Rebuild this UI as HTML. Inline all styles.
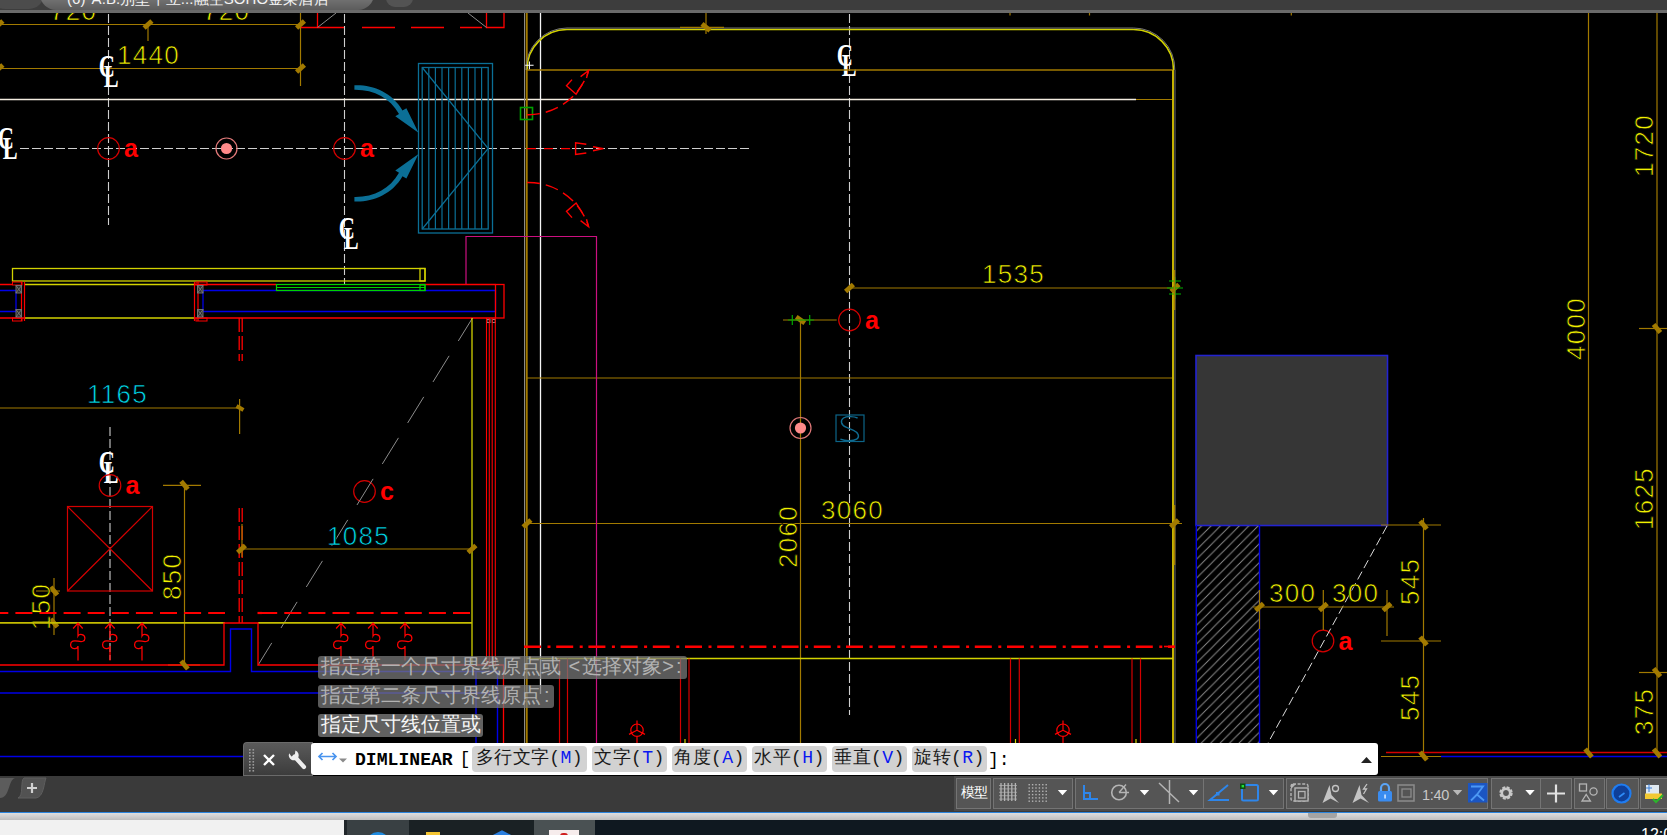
<!DOCTYPE html>
<html><head><meta charset="utf-8"><title>AutoCAD</title>
<style>
html,body{margin:0;padding:0;background:#000;overflow:hidden}
body{width:1667px;height:835px;position:relative;font-family:"Liberation Sans",sans-serif}
svg text.dim{font-family:"Liberation Sans",sans-serif;paint-order:fill stroke;stroke:#000;stroke-width:0.7px}
svg text.thinS{paint-order:fill stroke;stroke:#000;stroke-width:2.1px}
#draw{position:absolute;left:0;top:0;width:1667px;height:835px}
#topbar{position:absolute;left:0;top:0;width:1667px;height:13px;background:#3d3d3d;overflow:hidden}
#topbar .strip{position:absolute;left:0;top:10px;width:1667px;height:3px;background:#6a6a6a}
#topbar .tab{position:absolute;left:40px;top:-8px;width:334px;height:18px;border-radius:0 0 16px 16px;background:linear-gradient(#808080,#5c5c5c)}
#topbar .tab span{position:absolute;left:27px;top:-1px;color:#f4f4f4;font-size:15px;line-height:15px;white-space:nowrap;letter-spacing:0.1px}
#topbar .lt{position:absolute;left:-10px;top:-6px;width:54px;height:15px;border-radius:0 0 16px 16px;background:#4c4c4c}
#topbar .plus{position:absolute;left:386px;top:-8px;width:27px;height:15px;border-radius:0 0 9px 9px;background:#535353;color:#cfcfcf;font-weight:bold;font-size:14px;text-align:center;line-height:6px}
.tip{position:absolute;left:318px;height:23px;border-radius:3px;font-size:20px;line-height:21px;white-space:nowrap;padding:0 0 0 3px;box-sizing:border-box;overflow:hidden}
.tip.dimmed{background:rgba(122,122,122,0.74);color:#b2b2b2}
.tip.act{background:#616161;color:#f6f6f6}
#cmd{position:absolute;left:243px;top:742px;width:1135px;height:33px;}
#cmd .handle{position:absolute;left:0;top:0;width:70px;height:34px;border-radius:4px 0 0 0;background:linear-gradient(#5a5a5a,#3c3c3c);border:1px solid #6a6a6a;border-right:none;box-sizing:border-box}
#cmd .input{position:absolute;left:68px;top:1px;width:1067px;height:32px;background:#fff;border-radius:3px;font-family:"Liberation Mono",monospace;font-size:18.1px;line-height:32px;white-space:nowrap;color:#000}
#cmd .name{position:absolute;left:44px;top:1px;font-weight:bold}
.chip{letter-spacing:0.35px;position:absolute;top:3px;height:26px;line-height:25px;background:#d2d2d2;border-radius:4px;text-align:center;color:#1a1a1a}
.chip b{font-weight:normal;color:#0a18f0}
#bottom{position:absolute;left:0;top:776px;width:1667px;height:36.5px;background:#3a3a3a}
#status{position:absolute;left:954px;top:0;width:713px;height:35px;background:#4a4a4a}
.grp{position:absolute;top:1.5px;height:31px;background:#555;border:1px solid #747474;box-sizing:border-box}
#blueline{position:absolute;left:0;top:812px;width:1667px;height:1px;background:#2a84dc}
#scroll{position:absolute;left:0;top:813px;width:1667px;height:6.8px;background:linear-gradient(#dedede,#bebebe)}
#task{position:absolute;left:0;top:819.7px;width:1667px;height:15.3px;background:#0f1820;overflow:hidden}
</style></head><body>
<svg id="draw" width="1667" height="835" viewBox="0 0 1667 835" shape-rendering="auto">
<rect x="0" y="0" width="1667" height="835" fill="#000"/>
<line x1="0" y1="24.5" x2="300" y2="24.5" stroke="#a27a00" stroke-width="1.2" />
<line x1="0" y1="68.5" x2="300" y2="68.5" stroke="#a27a00" stroke-width="1.2" />
<line x1="300.5" y1="13" x2="300.5" y2="86" stroke="#a27a00" stroke-width="1.2" />
<line x1="148" y1="24" x2="148" y2="41" stroke="#a27a00" stroke-width="1.2" />
<rect x="-5.25" y="-2.4" width="10.5" height="4.8" fill="#a27a00" transform="translate(148 24.5) rotate(-42)"/>
<rect x="-5.25" y="-2.4" width="10.5" height="4.8" fill="#a27a00" transform="translate(300.5 24.5) rotate(-42)"/>
<rect x="-5.25" y="-2.4" width="10.5" height="4.8" fill="#a27a00" transform="translate(300.5 68.5) rotate(-42)"/>
<rect x="-5.25" y="-2.4" width="10.5" height="4.8" fill="#a27a00" transform="translate(-1 24.5) rotate(-42)"/>
<rect x="-5.25" y="-2.4" width="10.5" height="4.8" fill="#a27a00" transform="translate(-1 68.5) rotate(-42)"/>
<text class="dim" x="50" y="19.5" fill="#f0f000" font-size="26" text-anchor="start" letter-spacing="1.3">720</text>
<text class="dim" x="203" y="19.5" fill="#f0f000" font-size="26" text-anchor="start" letter-spacing="1.3">720</text>
<text class="dim" x="117" y="64" fill="#f0f000" font-size="26" text-anchor="start" letter-spacing="1.3">1440</text>
<path d="M301 27.5H345 M317.5 13V27.5 M486.5 13V27.5H504V13" stroke="#ff0000" stroke-width="1.3" fill="none" />
<line x1="362" y1="27.5" x2="482" y2="27.5" stroke="#ff0000" stroke-width="1.3" stroke-dasharray="33 16"/>
<line x1="317.5" y1="27.5" x2="336" y2="13" stroke="#8c8c8c" stroke-width="1" />
<line x1="486.5" y1="27.5" x2="468" y2="13" stroke="#8c8c8c" stroke-width="1" />
<line x1="108.5" y1="14" x2="108.5" y2="225" stroke="#cfcfcf" stroke-width="1.1" stroke-dasharray="9 3"/>
<line x1="344.5" y1="14" x2="344.5" y2="285" stroke="#cfcfcf" stroke-width="1.1" stroke-dasharray="9 3"/>
<line x1="20" y1="148.5" x2="752" y2="148.5" stroke="#cfcfcf" stroke-width="1.1" stroke-dasharray="9 3"/>
<line x1="849.5" y1="14" x2="849.5" y2="715" stroke="#cfcfcf" stroke-width="1.1" stroke-dasharray="9 3"/>
<line x1="110" y1="427" x2="110" y2="660" stroke="#bdbdbd" stroke-width="1.2" stroke-dasharray="9 3"/>
<line x1="0" y1="99.5" x2="1136" y2="99.5" stroke="#f2ece0" stroke-width="1.3" />
<line x1="1136" y1="99.5" x2="1172" y2="99.5" stroke="#a27a00" stroke-width="1.2" />
<line x1="540.5" y1="13" x2="540.5" y2="694" stroke="#f4f4f4" stroke-width="1.3" />
<g fill="#fff" font-family="Liberation Serif, serif" font-weight="bold"><text transform="translate(98.8 76.6) scale(0.7 1)" font-size="32">C</text><text transform="translate(103.7 87.1) scale(0.72 1)" font-size="31">L</text></g>
<g fill="#fff" font-family="Liberation Serif, serif" font-weight="bold"><text transform="translate(-2.2 148.6) scale(0.7 1)" font-size="32">C</text><text transform="translate(2.7 159.1) scale(0.72 1)" font-size="31">L</text></g>
<g fill="#fff" font-family="Liberation Serif, serif" font-weight="bold"><text transform="translate(338.8 238.6) scale(0.7 1)" font-size="32">C</text><text transform="translate(343.7 249.1) scale(0.72 1)" font-size="31">L</text></g>
<g fill="#fff" font-family="Liberation Serif, serif" font-weight="bold"><text transform="translate(836.8 65.6) scale(0.7 1)" font-size="32">C</text><text transform="translate(841.7 76.1) scale(0.72 1)" font-size="31">L</text></g>
<g fill="#fff" font-family="Liberation Serif, serif" font-weight="bold"><text transform="translate(98.8 472.6) scale(0.7 1)" font-size="32">C</text><text transform="translate(103.7 483.1) scale(0.72 1)" font-size="31">L</text></g>
<circle cx="108.5" cy="148.5" r="10.8" stroke="#d40000" stroke-width="1.2" fill="none"/>
<text x="124.0" y="157.0" fill="#ff0000" font-size="25" font-weight="bold" font-family="Liberation Sans, sans-serif">a</text>
<circle cx="344.5" cy="148.5" r="10.8" stroke="#d40000" stroke-width="1.2" fill="none"/>
<text x="360.0" y="157.0" fill="#ff0000" font-size="25" font-weight="bold" font-family="Liberation Sans, sans-serif">a</text>
<circle cx="849.5" cy="320" r="10.8" stroke="#d40000" stroke-width="1.2" fill="none"/>
<text x="865.0" y="328.5" fill="#ff0000" font-size="25" font-weight="bold" font-family="Liberation Sans, sans-serif">a</text>
<circle cx="110" cy="485.5" r="10.8" stroke="#d40000" stroke-width="1.2" fill="none"/>
<text x="125.5" y="494.0" fill="#ff0000" font-size="25" font-weight="bold" font-family="Liberation Sans, sans-serif">a</text>
<circle cx="364.5" cy="491.5" r="10.8" stroke="#d40000" stroke-width="1.2" fill="none"/>
<text x="380.0" y="500.0" fill="#ff0000" font-size="25" font-weight="bold" font-family="Liberation Sans, sans-serif">c</text>
<circle cx="1323" cy="641" r="10.8" stroke="#d40000" stroke-width="1.2" fill="none"/>
<text x="1338.5" y="649.5" fill="#ff0000" font-size="25" font-weight="bold" font-family="Liberation Sans, sans-serif">a</text>
<circle cx="226.5" cy="148.5" r="10.5" stroke="#e07878" stroke-width="1.2" fill="none"/>
<circle cx="226.5" cy="148.5" r="5.6" stroke="none" stroke-width="0" fill="#ff8a8a"/>
<path d="M354.4 85.3 C372 84.5 392 92 402.5 110.5 L406.4 108.2 L418.5 132.8 L395.3 116.3 L399 114 C390 98 374 89.5 354.4 89.8 Z" fill="#0b6f96"/>
<path d="M354.4 85.3 C372 84.5 392 92 402.5 110.5 L406.4 108.2 L418.5 132.8 L395.3 116.3 L399 114 C390 98 374 89.5 354.4 89.8 Z" fill="#0b6f96" transform="translate(0 286.8) scale(1 -1)"/>
<rect x="418.5" y="63.5" width="74" height="169.5" stroke="#0b6f96" stroke-width="1.3" fill="none" />
<rect x="422.2" y="67.5" width="66" height="161.5" stroke="#0b6f96" stroke-width="1.3" fill="none" />
<line x1="428.8" y1="67.5" x2="428.8" y2="229" stroke="#0b6f96" stroke-width="1.2" />
<line x1="435.4" y1="67.5" x2="435.4" y2="229" stroke="#0b6f96" stroke-width="1.2" />
<line x1="442.0" y1="67.5" x2="442.0" y2="229" stroke="#0b6f96" stroke-width="1.2" />
<line x1="448.59999999999997" y1="67.5" x2="448.59999999999997" y2="229" stroke="#0b6f96" stroke-width="1.2" />
<line x1="455.2" y1="67.5" x2="455.2" y2="229" stroke="#0b6f96" stroke-width="1.2" />
<line x1="461.79999999999995" y1="67.5" x2="461.79999999999995" y2="229" stroke="#0b6f96" stroke-width="1.2" />
<line x1="468.4" y1="67.5" x2="468.4" y2="229" stroke="#0b6f96" stroke-width="1.2" />
<line x1="475.0" y1="67.5" x2="475.0" y2="229" stroke="#0b6f96" stroke-width="1.2" />
<line x1="481.59999999999997" y1="67.5" x2="481.59999999999997" y2="229" stroke="#0b6f96" stroke-width="1.2" />
<path d="M422.2 67.5L488.2 148.5L422.2 229" stroke="#0b6f96" stroke-width="1.2" fill="none" />
<line x1="524.5" y1="13" x2="524.5" y2="743" stroke="#8a8a8a" stroke-width="1" />
<line x1="526.7" y1="13" x2="526.7" y2="743" stroke="#a27a00" stroke-width="2" />
<path d="M527 70 A40 40 0 0 1 567 29.5 H1133.5 A40 40 0 0 1 1173.5 70" stroke="#d2d200" stroke-width="1.6" fill="none" />
<path d="M526 70 A41 41 0 0 1 567 28 H1133.5 A41 41 0 0 1 1174.8 70" stroke="#777" stroke-width="1" fill="none" />
<line x1="680" y1="27.3" x2="724" y2="27.3" stroke="#a27a00" stroke-width="1.2" />
<line x1="706" y1="13" x2="706" y2="34" stroke="#a27a00" stroke-width="1.2" />
<rect x="-5.25" y="-2.4" width="10.5" height="4.8" fill="#a27a00" transform="translate(706 27.3) rotate(40)"/>
<line x1="527" y1="70" x2="1173" y2="70" stroke="#a27a00" stroke-width="1.6" />
<line x1="1173" y1="70" x2="1173" y2="743" stroke="#c6b200" stroke-width="2" />
<line x1="1175" y1="70" x2="1175" y2="743" stroke="#6e6e6e" stroke-width="1" />
<line x1="527" y1="378" x2="1172" y2="378" stroke="#a27a00" stroke-width="1.2" />
<line x1="527" y1="523.5" x2="1182" y2="523.5" stroke="#a27a00" stroke-width="1.2" />
<rect x="-5.25" y="-2.4" width="10.5" height="4.8" fill="#a27a00" transform="translate(527 523.5) rotate(-42)"/>
<rect x="-5.25" y="-2.4" width="10.5" height="4.8" fill="#a27a00" transform="translate(1174.5 523.5) rotate(-42)"/>
<line x1="1174.5" y1="505" x2="1174.5" y2="565" stroke="#a27a00" stroke-width="1.5" />
<line x1="1010" y1="13" x2="1010" y2="15.5" stroke="#a27a00" stroke-width="1.2" />
<line x1="1089.5" y1="13" x2="1089.5" y2="15.5" stroke="#a27a00" stroke-width="1.2" />
<line x1="1291.3" y1="13" x2="1291.3" y2="15.5" stroke="#a27a00" stroke-width="1.2" />
<path d="M525.2 65.3H533.6 M529.4 61.4V69.2" stroke="#ffffff" stroke-width="1.1" fill="none" />
<rect x="520.5" y="107.5" width="12" height="12" stroke="#00a000" stroke-width="1.6" fill="none" />
<g stroke="#ff0000" stroke-width="1.4" fill="none"><path d="M527 114.7 A63 63 0 0 0 588.6 70.5" stroke-dasharray="13 6"/><path d="M572 79.6 L566.5 85.8 L576.1 94.2 L582.4 84.2 M580.6 76.6 L588.6 70.5 L586.5 78"/></g>
<g stroke="#ff0000" stroke-width="1.4" fill="none" transform="translate(0 297.2) scale(1 -1)"><path d="M527 114.7 A63 63 0 0 0 588.6 70.5" stroke-dasharray="13 6"/><path d="M572 79.6 L566.5 85.8 L576.1 94.2 L582.4 84.2 M580.6 76.6 L588.6 70.5 L586.5 78"/></g>
<path d="M527 148.6H576" stroke="#ff0000" stroke-width="1.4" fill="none" stroke-dasharray="9 8"/>
<path d="M586.3 144.3 L575.6 142.7 V154.5 L586.3 153 M593 146.8 L603.4 148.6 L593 150.7" stroke="#ff0000" stroke-width="1.4" fill="none" />
<path d="M466 285V236.5H596.5V743" stroke="#cc1080" stroke-width="1.2" fill="none" />
<line x1="849" y1="288" x2="1173" y2="288" stroke="#a27a00" stroke-width="1.2" />
<rect x="-5.25" y="-2.4" width="10.5" height="4.8" fill="#a27a00" transform="translate(849.5 288) rotate(-42)"/>
<rect x="-5.25" y="-2.4" width="10.5" height="4.8" fill="#a27a00" transform="translate(1175 288) rotate(-42)"/>
<text class="dim" x="982" y="283" fill="#f0f000" font-size="26" text-anchor="start" letter-spacing="1.3">1535</text>
<path d="M1169 281H1181 M1169 294H1181 M1175 277V299 M1167 288H1183" stroke="#00b400" stroke-width="1" fill="none" />
<line x1="1174.5" y1="270" x2="1174.5" y2="310" stroke="#a27a00" stroke-width="1.5" />
<line x1="783" y1="320" x2="836.7" y2="320" stroke="#a27a00" stroke-width="1.2" />
<line x1="800.5" y1="320" x2="800.5" y2="743" stroke="#a27a00" stroke-width="1.2" />
<rect x="-5.25" y="-2.4" width="10.5" height="4.8" fill="#a27a00" transform="translate(800.5 320) rotate(35)"/>
<path d="M792.3 315V325 M809.7 315V325 M788 320H814" stroke="#00a800" stroke-width="1.2" fill="none" />
<circle cx="800.5" cy="428" r="10.5" stroke="#e07878" stroke-width="1.2" fill="none"/>
<circle cx="800.5" cy="428" r="5.6" stroke="none" stroke-width="0" fill="#ff8a8a"/>
<rect x="836" y="415" width="28" height="26.5" stroke="#0d6488" stroke-width="1.2" fill="none" />
<path d="M857.6 418 C854 416.2 846.5 416 843.5 418 C840 420.6 841 425 846 427.2 L853.5 430.4 C858.6 432.6 860 436.6 856.6 439.2 C853 441.6 845 441 840.4 439.2" stroke="#0f6c92" stroke-width="1.4" fill="none" />
<text class="dim" x="821" y="519" fill="#f0f000" font-size="26" text-anchor="start" letter-spacing="1.3">3060</text>
<text class="dim" x="797" y="568" fill="#f0f000" font-size="26" text-anchor="start" letter-spacing="1.3" transform="rotate(-90 797 568)">2060</text>
<line x1="524" y1="646.7" x2="1175" y2="646.7" stroke="#ff0000" stroke-width="2.6" stroke-dasharray="17 6.5 3 5.7"/>
<line x1="527" y1="658.5" x2="1173" y2="658.5" stroke="#d2d200" stroke-width="1.3" />
<line x1="1160" y1="658.5" x2="1173" y2="658.5" stroke="#d2d200" stroke-width="1.3" />
<line x1="559.5" y1="658.5" x2="559.5" y2="743" stroke="#d40000" stroke-width="1.2" />
<line x1="567.5" y1="658.5" x2="567.5" y2="743" stroke="#d40000" stroke-width="1.2" />
<line x1="680.5" y1="658.5" x2="680.5" y2="743" stroke="#d40000" stroke-width="1.2" />
<line x1="689" y1="658.5" x2="689" y2="743" stroke="#d40000" stroke-width="1.2" />
<line x1="1010.5" y1="658.5" x2="1010.5" y2="743" stroke="#d40000" stroke-width="1.2" />
<line x1="1019.3" y1="658.5" x2="1019.3" y2="743" stroke="#d40000" stroke-width="1.2" />
<line x1="1132" y1="658.5" x2="1132" y2="743" stroke="#d40000" stroke-width="1.2" />
<line x1="1140.5" y1="658.5" x2="1140.5" y2="743" stroke="#d40000" stroke-width="1.2" />
<line x1="685" y1="739" x2="685" y2="743" stroke="#d2d200" stroke-width="1.2" />
<line x1="1015.5" y1="739" x2="1015.5" y2="743" stroke="#d2d200" stroke-width="1.2" />
<line x1="1136" y1="739" x2="1136" y2="743" stroke="#d2d200" stroke-width="1.2" />
<circle cx="637" cy="730.2" r="6.2" stroke="#ff0000" stroke-width="1.2" fill="none"/>
<path d="M637 720.5V730.2L629 734.4M637 730.2L645 734.4M637 736.4V743" stroke="#ff0000" stroke-width="1.2" fill="none" />
<circle cx="1063" cy="730.2" r="6.2" stroke="#ff0000" stroke-width="1.2" fill="none"/>
<path d="M1063 720.5V730.2L1055 734.4M1063 730.2L1071 734.4M1063 736.4V743" stroke="#ff0000" stroke-width="1.2" fill="none" />
<line x1="1164" y1="646.5" x2="1175" y2="646.5" stroke="#ff0000" stroke-width="1.6" />
<rect x="12.5" y="268.5" width="412.5" height="12.5" stroke="#d2d200" stroke-width="1.3" fill="none" />
<line x1="25" y1="284.5" x2="195" y2="284.5" stroke="#d2d200" stroke-width="1.3" />
<line x1="25" y1="318" x2="195" y2="318" stroke="#d2d200" stroke-width="1.3" />
<path d="M0 284.5H12 M195 284.5H276 M420 284.5H495.5 M0 318H25 M195 318H495.5" stroke="#ff0000" stroke-width="1.3" fill="none" />
<path d="M0 290.5H16V311.5H0 M203 290.5V311.5H495.5V290.5H203" stroke="#0000e6" stroke-width="1.3" fill="none" />
<rect x="276.5" y="284.5" width="148.5" height="6" stroke="#00d200" stroke-width="1.2" fill="none" />
<line x1="276.5" y1="287.5" x2="425" y2="287.5" stroke="#00d200" stroke-width="1" />
<rect x="12.5" y="282" width="9.5" height="3" stroke="#ff0000" stroke-width="1" fill="none" />
<rect x="12.5" y="318" width="9.5" height="3" stroke="#ff0000" stroke-width="1" fill="none" />
<rect x="196" y="282" width="11" height="3" stroke="#ff0000" stroke-width="1" fill="none" />
<rect x="196" y="318" width="11" height="3" stroke="#ff0000" stroke-width="1" fill="none" />
<path d="M21.5 282V321 M24.5 282V321 M194.5 282V321 M198 282V321" stroke="#ff0000" stroke-width="1.2" fill="none" />
<rect x="16" y="285.5" width="5.5" height="7.5" stroke="#707070" stroke-width="1" fill="#303030" />
<path d="M16 285.5l5.5 7.5M21.5 285.5l-5.5 7.5" stroke="#808080" stroke-width="0.8" fill="none" />
<rect x="16" y="309.5" width="5.5" height="7.5" stroke="#707070" stroke-width="1" fill="#303030" />
<path d="M16 309.5l5.5 7.5M21.5 309.5l-5.5 7.5" stroke="#808080" stroke-width="0.8" fill="none" />
<rect x="197.5" y="285.5" width="5.5" height="7.5" stroke="#707070" stroke-width="1" fill="#303030" />
<path d="M197.5 285.5l5.5 7.5M203.0 285.5l-5.5 7.5" stroke="#808080" stroke-width="0.8" fill="none" />
<rect x="197.5" y="309.5" width="5.5" height="7.5" stroke="#707070" stroke-width="1" fill="#303030" />
<path d="M197.5 309.5l5.5 7.5M203.0 309.5l-5.5 7.5" stroke="#808080" stroke-width="0.8" fill="none" />
<rect x="495.5" y="284.5" width="8.5" height="33.5" stroke="#ff0000" stroke-width="1.3" fill="none" />
<rect x="420" y="268.5" width="5" height="12.5" stroke="#d2d200" stroke-width="1.3" fill="none" />
<rect x="420" y="285" width="5" height="5.5" stroke="#00d200" stroke-width="1.2" fill="none" />
<rect x="487" y="319.5" width="3" height="3" stroke="#8a8a8a" stroke-width="1" fill="none" />
<rect x="492.3" y="319.5" width="3" height="3" stroke="#8a8a8a" stroke-width="1" fill="none" />
<line x1="239.2" y1="318" x2="239.2" y2="361" stroke="#ff0000" stroke-width="1.3" stroke-dasharray="14 4"/>
<line x1="242.2" y1="318" x2="242.2" y2="361" stroke="#ff0000" stroke-width="1.3" stroke-dasharray="14 4"/>
<line x1="239.2" y1="508" x2="239.2" y2="623" stroke="#ff0000" stroke-width="1.3" stroke-dasharray="14 4"/>
<line x1="242.2" y1="508" x2="242.2" y2="623" stroke="#ff0000" stroke-width="1.3" stroke-dasharray="14 4"/>
<text class="dim" x="87" y="403" fill="#00d8ea" font-size="26" text-anchor="start" letter-spacing="1.3">1165</text>
<line x1="0" y1="408" x2="240" y2="408" stroke="#a27a00" stroke-width="1.2" />
<line x1="239.6" y1="399" x2="239.6" y2="434" stroke="#a27a00" stroke-width="1.2" />
<rect x="-4.0" y="-2.0" width="8" height="4" fill="#a27a00" transform="translate(240 408) rotate(30)"/>
<line x1="472.5" y1="318" x2="258" y2="665.2" stroke="#8c8c8c" stroke-width="1" stroke-dasharray="30.7 17.5" stroke-dashoffset="3.7"/>
<line x1="472" y1="318" x2="472" y2="665" stroke="#d2d200" stroke-width="1.3" />
<line x1="486.5" y1="318" x2="486.5" y2="665" stroke="#ff0000" stroke-width="1.1" />
<line x1="489.3" y1="318" x2="489.3" y2="665" stroke="#ff0000" stroke-width="1.1" />
<line x1="492.2" y1="318" x2="492.2" y2="665" stroke="#ff0000" stroke-width="1.1" />
<line x1="495.3" y1="318" x2="495.3" y2="665" stroke="#ff0000" stroke-width="1.1" />
<rect x="67.5" y="506.5" width="85" height="84.5" stroke="#d40000" stroke-width="1.2" fill="none" />
<path d="M67.5 506.5L152.5 591M152.5 506.5L67.5 591" stroke="#d40000" stroke-width="1.2" fill="none" />
<line x1="184.5" y1="485" x2="184.5" y2="665" stroke="#a27a00" stroke-width="1.2" />
<line x1="163" y1="485.3" x2="201" y2="485.3" stroke="#a27a00" stroke-width="1.2" />
<rect x="-5.25" y="-2.4" width="10.5" height="4.8" fill="#a27a00" transform="translate(184.5 485.3) rotate(50)"/>
<line x1="168" y1="665" x2="200" y2="665" stroke="#a27a00" stroke-width="1.2" />
<text class="dim" x="181" y="600" fill="#f0f000" font-size="26" text-anchor="start" letter-spacing="1.3" transform="rotate(-90 181 600)">850</text>
<line x1="240" y1="549" x2="475" y2="549" stroke="#a27a00" stroke-width="1.2" />
<line x1="242" y1="524" x2="242" y2="557" stroke="#a27a00" stroke-width="1.2" />
<rect x="-5.25" y="-2.4" width="10.5" height="4.8" fill="#a27a00" transform="translate(241.5 549) rotate(-42)"/>
<rect x="-5.25" y="-2.4" width="10.5" height="4.8" fill="#a27a00" transform="translate(472 549) rotate(-42)"/>
<text class="dim" x="327" y="545" fill="#00d8ea" font-size="26" text-anchor="start" letter-spacing="1.3">1085</text>
<line x1="54" y1="578" x2="54" y2="635" stroke="#a27a00" stroke-width="1.2" />
<rect x="-5.25" y="-2.4" width="10.5" height="4.8" fill="#a27a00" transform="translate(54 591) rotate(50)"/>
<rect x="-5.25" y="-2.4" width="10.5" height="4.8" fill="#a27a00" transform="translate(54 623) rotate(50)"/>
<line x1="36" y1="591" x2="60" y2="591" stroke="#a27a00" stroke-width="1" />
<text class="dim" x="50" y="630" fill="#f0f000" font-size="26" text-anchor="start" letter-spacing="1.3" transform="rotate(-90 50 630)">150</text>
<line x1="0" y1="613" x2="225" y2="613" stroke="#ff0000" stroke-width="2.2" stroke-dasharray="17 7.1" stroke-dashoffset="8.7"/>
<line x1="260.2" y1="613" x2="472" y2="613" stroke="#ff0000" stroke-width="2.2" stroke-dasharray="17 7.1"/>
<line x1="257.5" y1="613" x2="262" y2="613" stroke="#ff0000" stroke-width="2.2" />
<line x1="0" y1="622.9" x2="225" y2="622.9" stroke="#c4bc00" stroke-width="1.8" />
<line x1="258" y1="622.9" x2="472" y2="622.9" stroke="#c4bc00" stroke-width="1.8" />
<path d="M0 665H224V623H258V665H503.5V743" stroke="#ff0000" stroke-width="1.3" fill="none" />
<rect x="-5.25" y="-2.4" width="10.5" height="4.8" fill="#a27a00" transform="translate(184.5 665) rotate(50)"/>
<path d="M0 671.5H230.5V629H251.5V671.5H497.5V743 M476 671.5V743 M0 693H490 M0 756.5H245" stroke="#0000e6" stroke-width="1.4" fill="none" />
<path d="M78 660.5V646 C77.5 649.8 70.6 649.8 70.6 644.5 C70.6 640.8 74 640.4 78 641.2 C82 642 84.9 641.6 84.9 638.2 C84.9 634.3 79.5 633.3 78 636 V623.2 M73.1 628.5L78 623.2L82.7 628.5" stroke="#ff0000" stroke-width="1.25" fill="none" />
<path d="M110 660.5V646 C109.5 649.8 102.6 649.8 102.6 644.5 C102.6 640.8 106 640.4 110 641.2 C114 642 116.9 641.6 116.9 638.2 C116.9 634.3 111.5 633.3 110 636 V623.2 M105.1 628.5L110 623.2L114.7 628.5" stroke="#ff0000" stroke-width="1.25" fill="none" />
<path d="M142 660.5V646 C141.5 649.8 134.6 649.8 134.6 644.5 C134.6 640.8 138 640.4 142 641.2 C146 642 148.9 641.6 148.9 638.2 C148.9 634.3 143.5 633.3 142 636 V623.2 M137.1 628.5L142 623.2L146.7 628.5" stroke="#ff0000" stroke-width="1.25" fill="none" />
<path d="M341 660.5V646 C340.5 649.8 333.6 649.8 333.6 644.5 C333.6 640.8 337 640.4 341 641.2 C345 642 347.9 641.6 347.9 638.2 C347.9 634.3 342.5 633.3 341 636 V623.2 M336.1 628.5L341 623.2L345.7 628.5" stroke="#ff0000" stroke-width="1.25" fill="none" />
<path d="M373 660.5V646 C372.5 649.8 365.6 649.8 365.6 644.5 C365.6 640.8 369 640.4 373 641.2 C377 642 379.9 641.6 379.9 638.2 C379.9 634.3 374.5 633.3 373 636 V623.2 M368.1 628.5L373 623.2L377.7 628.5" stroke="#ff0000" stroke-width="1.25" fill="none" />
<path d="M405 660.5V646 C404.5 649.8 397.6 649.8 397.6 644.5 C397.6 640.8 401 640.4 405 641.2 C409 642 411.9 641.6 411.9 638.2 C411.9 634.3 406.5 633.3 405 636 V623.2 M400.1 628.5L405 623.2L409.7 628.5" stroke="#ff0000" stroke-width="1.25" fill="none" />
<rect x="1196" y="355.5" width="191.5" height="170" stroke="#2424d0" stroke-width="1.6" fill="#363636" />
<defs><pattern id="h" width="9.43" height="9.43" patternUnits="userSpaceOnUse" patternTransform="translate(1.81 0)"><path d="M-1 10.43L10.43 -1M-1 1L1 -1M8.43 10.43L10.43 8.43" stroke="#8c8c8c" stroke-width="1"/></pattern></defs>
<rect x="1196.5" y="526" width="63" height="217" fill="url(#h)"/>
<line x1="1196.3" y1="525" x2="1196.3" y2="743" stroke="#0000e6" stroke-width="1.4" />
<line x1="1259.5" y1="525" x2="1259.5" y2="743" stroke="#0000e6" stroke-width="1.4" />
<line x1="1387" y1="526" x2="1268" y2="743" stroke="#dcdcdc" stroke-width="1" stroke-dasharray="9 4"/>
<line x1="1253" y1="607" x2="1394" y2="607" stroke="#a27a00" stroke-width="1.2" />
<line x1="1259.5" y1="590" x2="1259.5" y2="629" stroke="#a27a00" stroke-width="1.2" />
<rect x="-5.25" y="-2.4" width="10.5" height="4.8" fill="#a27a00" transform="translate(1259.5 607) rotate(-42)"/>
<line x1="1323.3" y1="590" x2="1323.3" y2="630" stroke="#a27a00" stroke-width="1.2" />
<rect x="-5.25" y="-2.4" width="10.5" height="4.8" fill="#a27a00" transform="translate(1323.3 607) rotate(-42)"/>
<line x1="1387" y1="590" x2="1387" y2="636" stroke="#a27a00" stroke-width="1.2" />
<rect x="-5.25" y="-2.4" width="10.5" height="4.8" fill="#a27a00" transform="translate(1387 607) rotate(-42)"/>
<text class="dim" x="1269" y="602" fill="#f0f000" font-size="26" text-anchor="start" letter-spacing="1.3">300</text>
<text class="dim" x="1332" y="602" fill="#f0f000" font-size="26" text-anchor="start" letter-spacing="1.3">300</text>
<line x1="1423.5" y1="518" x2="1423.5" y2="757" stroke="#a27a00" stroke-width="1.2" />
<line x1="1381" y1="525" x2="1441" y2="525" stroke="#a27a00" stroke-width="1.2" />
<line x1="1381" y1="641" x2="1441" y2="641" stroke="#a27a00" stroke-width="1.2" />
<rect x="-5.25" y="-2.4" width="10.5" height="4.8" fill="#a27a00" transform="translate(1423.5 525) rotate(50)"/>
<rect x="-5.25" y="-2.4" width="10.5" height="4.8" fill="#a27a00" transform="translate(1423.5 641) rotate(50)"/>
<text class="dim" x="1419" y="605" fill="#f0f000" font-size="26" text-anchor="start" letter-spacing="1.3" transform="rotate(-90 1419 605)">545</text>
<text class="dim" x="1419" y="721" fill="#f0f000" font-size="26" text-anchor="start" letter-spacing="1.3" transform="rotate(-90 1419 721)">545</text>
<line x1="1588.5" y1="13" x2="1588.5" y2="757" stroke="#a27a00" stroke-width="1.2" />
<line x1="1657" y1="13" x2="1657" y2="757" stroke="#a27a00" stroke-width="1.2" />
<line x1="1639" y1="328.5" x2="1667" y2="328.5" stroke="#a27a00" stroke-width="1.2" />
<rect x="-5.25" y="-2.4" width="10.5" height="4.8" fill="#a27a00" transform="translate(1657 328.5) rotate(50)"/>
<line x1="1639" y1="672.5" x2="1667" y2="672.5" stroke="#a27a00" stroke-width="1.2" />
<rect x="-5.25" y="-2.4" width="10.5" height="4.8" fill="#a27a00" transform="translate(1657 672.5) rotate(50)"/>
<text class="dim" x="1653" y="177" fill="#f0f000" font-size="26" text-anchor="start" letter-spacing="1.3" transform="rotate(-90 1653 177)">1720</text>
<text class="dim" x="1585" y="360" fill="#f0f000" font-size="26" text-anchor="start" letter-spacing="1.3" transform="rotate(-90 1585 360)">4000</text>
<text class="dim" x="1653" y="735" fill="#f0f000" font-size="26" text-anchor="start" letter-spacing="1.3" transform="rotate(-90 1653 735)">375</text>
<text class="dim" x="1653" y="530" fill="#f0f000" font-size="26" text-anchor="start" letter-spacing="1.3" transform="rotate(-90 1653 530)">1625</text>
<line x1="1386" y1="752.5" x2="1667" y2="752.5" stroke="#d40000" stroke-width="1.6" />
<line x1="1441" y1="756.5" x2="1667" y2="756.5" stroke="#0000e6" stroke-width="1.4" />
<line x1="1381" y1="756.5" x2="1441" y2="756.5" stroke="#a27a00" stroke-width="1.2" />
<rect x="-5.25" y="-2.4" width="10.5" height="4.8" fill="#a27a00" transform="translate(1423.5 756) rotate(50)"/>
<rect x="-5.25" y="-2.4" width="10.5" height="4.8" fill="#a27a00" transform="translate(1588.5 753) rotate(50)"/>
<rect x="-5.25" y="-2.4" width="10.5" height="4.8" fill="#a27a00" transform="translate(1657 753) rotate(50)"/>
</svg>
<div id="topbar"><div class="lt"></div><div class="tab"><span>(6)*A.B.别墅平立...融空SOHO金莱酒店</span></div><div class="plus">+</div><div class="strip"></div></div>
<div class="tip dimmed" style="top:656px;width:369px">指定第一个尺寸界线原点或<span style="letter-spacing:2px"> &lt;</span>选择对象<span style="letter-spacing:2px">&gt;:</span></div>
<div class="tip dimmed" style="top:685px;width:236px">指定第二条尺寸界线原点<span style="padding-left:3px">:</span></div>
<div class="tip act" style="top:714px;width:165px">指定尺寸线位置或</div>
<div id="cmd"><div class="handle">
<svg width="70" height="34" viewBox="0 0 70 34"><g fill="#9a9a9a"><rect x="5" y="6" width="1.6" height="1.6"/><rect x="5" y="9" width="1.6" height="1.6"/><rect x="5" y="12" width="1.6" height="1.6"/><rect x="5" y="15" width="1.6" height="1.6"/><rect x="5" y="18" width="1.6" height="1.6"/><rect x="5" y="21" width="1.6" height="1.6"/><rect x="5" y="24" width="1.6" height="1.6"/><rect x="5" y="27" width="1.6" height="1.6"/><rect x="8.5" y="6" width="1.6" height="1.6"/><rect x="8.5" y="9" width="1.6" height="1.6"/><rect x="8.5" y="12" width="1.6" height="1.6"/><rect x="8.5" y="15" width="1.6" height="1.6"/><rect x="8.5" y="18" width="1.6" height="1.6"/><rect x="8.5" y="21" width="1.6" height="1.6"/><rect x="8.5" y="24" width="1.6" height="1.6"/><rect x="8.5" y="27" width="1.6" height="1.6"/></g>
<path d="M20 12L30 22M30 12L20 22" stroke="#fff" stroke-width="2.4"/>
<path d="M50.5 13.5L60 24" stroke="#ededed" stroke-width="4.2" stroke-linecap="round"/><path d="M45.2 10.2a5 5 0 1 0 6.2 -2.6l-0.6 4.6l-3.4 1.2z" fill="#ededed"/></svg>
</div>
<div class="input">
<svg style="position:absolute;left:6px;top:6px" width="34" height="18" viewBox="0 0 34 18"><path d="M2 7.5H19M5.5 4L2 7.5L5.5 11M15.5 4L19 7.5L15.5 11" stroke="#4a94ee" stroke-width="1.7" fill="none"/><path d="M22 9.5h8l-4 4z" fill="#8a8a8a"/></svg>
<span class="name">DIMLINEAR</span><span style="position:absolute;left:148.5px;top:0px">[</span>
<span class="chip" style="left:161px;width:115px">多行文字(<b>M</b>)</span>
<span class="chip" style="left:281px;width:75px">文字(<b>T</b>)</span>
<span class="chip" style="left:361px;width:75px">角度(<b>A</b>)</span>
<span class="chip" style="left:441px;width:75px">水平(<b>H</b>)</span>
<span class="chip" style="left:521px;width:75px">垂直(<b>V</b>)</span>
<span class="chip" style="left:601px;width:75px">旋转(<b>R</b>)</span>
<span style="position:absolute;left:677px;top:1px">]:</span>
<svg style="position:absolute;left:1050px;top:13px" width="12" height="8"><path d="M0 7L5.5 1L11 7z" fill="#222"/></svg>
</div></div>
<div id="bottom">
<svg style="position:absolute;left:0;top:0" width="60" height="36"><path d="M0 2H15C8 4 10 22 0 22z" fill="#5c5c5c"/><path d="M24 2H46C44 6 44 21 36 22H18C24 20 20 4 24 2z" fill="#525252" stroke="#5e5e5e"/><path d="M27 12H37M32 7V17" stroke="#d0d0d0" stroke-width="2.2"/></svg>
<div id="status"><div class="grp" style="left:1.5px;width:35.0px"></div><div class="grp" style="left:38.5px;width:80.0px"></div><div class="grp" style="left:120.5px;width:129.0px"></div><div class="grp" style="left:248.5px;width:81.0px"></div><div class="grp" style="left:331.5px;width:202.5px"></div><div class="grp" style="left:536.5px;width:50.0px"></div><div class="grp" style="left:585.5px;width:32.0px"></div><div class="grp" style="left:619.5px;width:31.0px"></div><div class="grp" style="left:652px;width:32.5px"></div><div class="grp" style="left:686px;width:30px"></div><div style="position:absolute;left:6.5px;top:8px;color:#fff;font-size:13.5px;line-height:18px;letter-spacing:-0.5px">模型</div><svg style="position:absolute;left:0;top:0" width="713" height="36" viewBox="0 0 713 36"><path d="M47.0 7V25" stroke="#b4b4b4" stroke-width="1.3"/><path d="M50.60000000000002 7V25" stroke="#b4b4b4" stroke-width="1.3"/><path d="M54.200000000000045 7V25" stroke="#b4b4b4" stroke-width="1.3"/><path d="M57.799999999999955 7V25" stroke="#b4b4b4" stroke-width="1.3"/><path d="M61.39999999999998 7V25" stroke="#b4b4b4" stroke-width="1.3"/><path d="M45 9.5H63" stroke="#b4b4b4" stroke-width="0.7"/><path d="M45 12.899999999999977H63" stroke="#b4b4b4" stroke-width="0.7"/><path d="M45 16.299999999999955H63" stroke="#b4b4b4" stroke-width="0.7"/><path d="M45 19.700000000000045H63" stroke="#b4b4b4" stroke-width="0.7"/><path d="M45 23.100000000000023H63" stroke="#b4b4b4" stroke-width="0.7"/><rect x="74.5" y="8.0" width="1.4" height="1.4" fill="#b4b4b4"/><rect x="74.5" y="11.299999999999955" width="1.4" height="1.4" fill="#b4b4b4"/><rect x="74.5" y="14.600000000000023" width="1.4" height="1.4" fill="#b4b4b4"/><rect x="74.5" y="17.899999999999977" width="1.4" height="1.4" fill="#b4b4b4"/><rect x="74.5" y="21.200000000000045" width="1.4" height="1.4" fill="#b4b4b4"/><rect x="74.5" y="24.5" width="1.4" height="1.4" fill="#b4b4b4"/><rect x="77.90000000000009" y="8.0" width="1.4" height="1.4" fill="#b4b4b4"/><rect x="77.90000000000009" y="11.299999999999955" width="1.4" height="1.4" fill="#b4b4b4"/><rect x="77.90000000000009" y="14.600000000000023" width="1.4" height="1.4" fill="#b4b4b4"/><rect x="77.90000000000009" y="17.899999999999977" width="1.4" height="1.4" fill="#b4b4b4"/><rect x="77.90000000000009" y="21.200000000000045" width="1.4" height="1.4" fill="#b4b4b4"/><rect x="77.90000000000009" y="24.5" width="1.4" height="1.4" fill="#b4b4b4"/><rect x="81.29999999999995" y="8.0" width="1.4" height="1.4" fill="#b4b4b4"/><rect x="81.29999999999995" y="11.299999999999955" width="1.4" height="1.4" fill="#b4b4b4"/><rect x="81.29999999999995" y="14.600000000000023" width="1.4" height="1.4" fill="#b4b4b4"/><rect x="81.29999999999995" y="17.899999999999977" width="1.4" height="1.4" fill="#b4b4b4"/><rect x="81.29999999999995" y="21.200000000000045" width="1.4" height="1.4" fill="#b4b4b4"/><rect x="81.29999999999995" y="24.5" width="1.4" height="1.4" fill="#b4b4b4"/><rect x="84.70000000000005" y="8.0" width="1.4" height="1.4" fill="#b4b4b4"/><rect x="84.70000000000005" y="11.299999999999955" width="1.4" height="1.4" fill="#b4b4b4"/><rect x="84.70000000000005" y="14.600000000000023" width="1.4" height="1.4" fill="#b4b4b4"/><rect x="84.70000000000005" y="17.899999999999977" width="1.4" height="1.4" fill="#b4b4b4"/><rect x="84.70000000000005" y="21.200000000000045" width="1.4" height="1.4" fill="#b4b4b4"/><rect x="84.70000000000005" y="24.5" width="1.4" height="1.4" fill="#b4b4b4"/><rect x="88.09999999999991" y="8.0" width="1.4" height="1.4" fill="#b4b4b4"/><rect x="88.09999999999991" y="11.299999999999955" width="1.4" height="1.4" fill="#b4b4b4"/><rect x="88.09999999999991" y="14.600000000000023" width="1.4" height="1.4" fill="#b4b4b4"/><rect x="88.09999999999991" y="17.899999999999977" width="1.4" height="1.4" fill="#b4b4b4"/><rect x="88.09999999999991" y="21.200000000000045" width="1.4" height="1.4" fill="#b4b4b4"/><rect x="88.09999999999991" y="24.5" width="1.4" height="1.4" fill="#b4b4b4"/><rect x="91.5" y="8.0" width="1.4" height="1.4" fill="#b4b4b4"/><rect x="91.5" y="11.299999999999955" width="1.4" height="1.4" fill="#b4b4b4"/><rect x="91.5" y="14.600000000000023" width="1.4" height="1.4" fill="#b4b4b4"/><rect x="91.5" y="17.899999999999977" width="1.4" height="1.4" fill="#b4b4b4"/><rect x="91.5" y="21.200000000000045" width="1.4" height="1.4" fill="#b4b4b4"/><rect x="91.5" y="24.5" width="1.4" height="1.4" fill="#b4b4b4"/><path d="M103.8 14.0h9.4l-4.7 5.2z" fill="#fff"/><path d="M130 9V23H144M130 17H136V23" stroke="#2e86ea" stroke-width="2" fill="none"/><circle cx="165" cy="16.5" r="7.3" stroke="#b4b4b4" stroke-width="1.6" fill="none"/><path d="M165 16.5H175M165 16.5L172 8.5" stroke="#b4b4b4" stroke-width="1.4"/><path d="M185.8 14.0h9.4l-4.7 5.2z" fill="#fff"/><path d="M205 7L225 26M215.5 4V28" stroke="#b4b4b4" stroke-width="1.5"/><path d="M234.8 14.0h9.4l-4.7 5.2z" fill="#fff"/><path d="M274 9L256 24H275" stroke="#2e86ea" stroke-width="2" fill="none"/><rect x="262" y="16" width="3.5" height="3.5" fill="#2e86ea"/><rect x="288" y="9" width="16" height="15.5" rx="1.5" stroke="#2e86ea" stroke-width="2" fill="none"/><rect x="286" y="7.5" width="5.5" height="5.5" fill="#0b4d12"/><rect x="287.5999999999999" y="9" width="2.4" height="2.4" fill="#22e03a"/><path d="M314.8 14.0h9.4l-4.7 5.2z" fill="#fff"/><rect x="337" y="8" width="17" height="17" rx="2" stroke="#b4b4b4" stroke-width="1.4" fill="none" stroke-dasharray="3 1.6"/><rect x="341" y="12" width="13" height="13" stroke="#b4b4b4" stroke-width="1.4" fill="#555"/><rect x="344.5" y="15.5" width="6.5" height="6.5" stroke="#b4b4b4" stroke-width="1.3" fill="none"/><path d="M337 8l5 0l-5 5z" fill="#b4b4b4"/><path d="M368.5 27L375.5 9L377.5 19L385.0 27L376.5 22.5z" fill="#c4c4c4"/><path d="M398.5 27L405.5 9L407.5 19L415.0 27L406.5 22.5z" fill="#c4c4c4"/><circle cx="381.5" cy="12.5" r="3" stroke="#c4c4c4" stroke-width="1.3" fill="none"/><path d="M413 8l-3.5 5h3l-3 5" stroke="#c4c4c4" stroke-width="1.3" fill="none"/><rect x="424" y="15" width="14" height="10.5" rx="1.5" fill="#3a8cf0"/><path d="M427 15v-3a4 4 0 0 1 8 0v3" stroke="#5aa4f6" stroke-width="2.2" fill="none"/><rect x="430.29999999999995" y="18.5" width="1.5" height="4" fill="#dcecff"/><rect x="444" y="9" width="16" height="16" stroke="#8c8c8c" stroke-width="1.5" fill="none"/><rect x="448" y="13" width="9" height="8" stroke="#8c8c8c" stroke-width="1.3" fill="none"/><text x="468" y="23.5" fill="#c8c8c8" font-size="14.5" font-family="Liberation Sans, sans-serif" letter-spacing="-0.3">1:40</text><path d="M498.8 14.0h9.4l-4.7 5.2z" fill="#b8b8b8"/><rect x="514" y="7" width="19.5" height="19.5" fill="#1b55c2"/><path d="M517 10.5h12l-6 8l7 6m-7 -6l-6 6" stroke="#4c98f4" stroke-width="1.8" fill="none"/><circle cx="552" cy="17" r="5" stroke="#c8c8c8" stroke-width="3.4" fill="none" stroke-dasharray="2.6 1.33"/><circle cx="552" cy="17" r="4.2" stroke="#c8c8c8" stroke-width="2.6" fill="none"/><path d="M571.3 14.0h9.4l-4.7 5.2z" fill="#fff"/><path d="M593 17.5H611M602 8.5V26.5" stroke="#e2e2e2" stroke-width="2.2"/><rect x="625.5" y="8" width="7" height="7" stroke="#b4b4b4" stroke-width="1.3" fill="none"/><circle cx="639.5" cy="15.5" r="3.6" stroke="#b4b4b4" stroke-width="1.3" fill="none"/><path d="M628 25l4.2 -6.5l4.2 6.5z" stroke="#b4b4b4" stroke-width="1.3" fill="none"/><circle cx="667.5" cy="17.5" r="9" stroke="#1f7cf0" stroke-width="2.2" fill="#0e3f9a"/><path d="M665 21l5.5 -4" stroke="#2f8cf8" stroke-width="1.6"/><rect x="692" y="9" width="13" height="10" fill="#dfe8f0"/><rect x="691" y="17.5" width="17" height="5.5" fill="#f2c832"/><path d="M699 23l3 3l7 -7" stroke="#2cb52c" stroke-width="2" fill="none"/><path d="M695 8v8m-3 -4h6" stroke="#3a7fd8" stroke-width="1"/></svg></div>
</div>
<div id="blueline"></div>
<div id="scroll"><div style="position:absolute;left:1308px;top:0;width:29px;height:5px;background:#a4a4a4;border-radius:0 0 3px 3px"></div></div>
<div id="task">
<div style="position:absolute;left:0;top:0;width:344px;height:15px;background:#f1f1f1"></div>
<div style="position:absolute;left:344px;top:0;width:3px;height:15px;background:#20262a"></div>
<div style="position:absolute;left:347px;top:0;width:62px;height:15px;background:#394043"></div>
<div style="position:absolute;left:409px;top:0;width:125px;height:15px;background:#1a2124"></div>
<div style="position:absolute;left:534px;top:0;width:61px;height:15px;background:#4a5153"></div>
<div style="position:absolute;left:366px;top:12px;width:24px;height:24px;border-radius:12px;background:#1e8be0"></div>
<div style="position:absolute;left:426px;top:12px;width:14px;height:6px;background:#f4c533"></div>
<svg style="position:absolute;left:488px;top:9px" width="28" height="8"><path d="M3 7L14 1.2L25 7z" fill="#2a7fe0"/></svg>
<div style="position:absolute;left:549px;top:10px;width:30px;height:10px;background:#f6ecec"></div>
<div style="position:absolute;left:560px;top:13px;width:8px;height:6px;background:#d02020;border-radius:3px 3px 0 0"></div>
<div style="position:absolute;left:1641px;top:7px;color:#fff;font-size:16px;line-height:16px">12:0</div>
</div>
</body></html>
